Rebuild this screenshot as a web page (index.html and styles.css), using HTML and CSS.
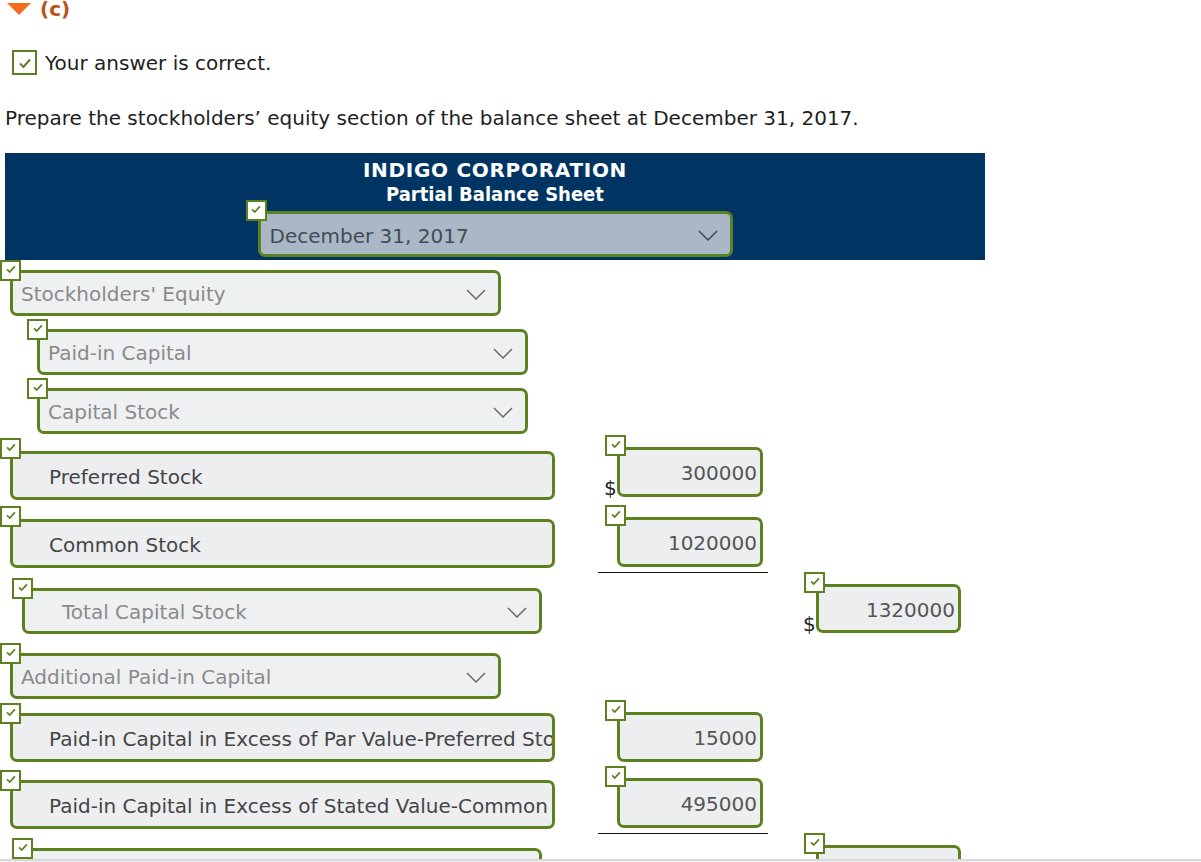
FILE: index.html
```html
<!DOCTYPE html>
<html>
<head>
<meta charset="utf-8">
<link rel="stylesheet" href="styles.css">
</head>
<body>
<div class="part-head"><span class="tri"></span><span class="part">(c)</span></div>

<div class="status">
  <span class="cb-big"><svg viewBox="0 0 16 16" width="16" height="16"><polyline points="3,8.5 6.5,12 13,4.5" /></svg></span>
  <span>Your answer is correct.</span>
</div>

<p class="prompt">Prepare the stockholders’ equity section of the balance sheet at December 31, 2017.</p>

<div class="sheet">
  <div class="sheet-head">
    <div class="t1">INDIGO CORPORATION</div>
    <div class="t2">Partial Balance Sheet</div>
    <div class="fw date-wrap">
      <span class="badge b-date"><svg viewBox="0 0 16 16"><polyline points="3.5,8.5 6.5,11.5 12.5,5" /></svg></span>
      <div class="sel date-sel"><span>December 31, 2017</span><svg class="chev" viewBox="0 0 20 11"><polyline points="1,1 10,10 19,1" /></svg></div>
    </div>
  </div>

  <div class="row r1">
    <div class="c1"><div class="fw l0">
      <span class="badge b-l"><svg viewBox="0 0 16 16"><polyline points="3.5,8.5 6.5,11.5 12.5,5" /></svg></span>
      <div class="sel w491"><span>Stockholders' Equity</span><svg class="chev" viewBox="0 0 20 11"><polyline points="1,1 10,10 19,1" /></svg></div>
    </div></div>
  </div>

  <div class="row r2">
    <div class="c1"><div class="fw l1">
      <span class="badge b-l"><svg viewBox="0 0 16 16"><polyline points="3.5,8.5 6.5,11.5 12.5,5" /></svg></span>
      <div class="sel w491"><span>Paid-in Capital</span><svg class="chev" viewBox="0 0 20 11"><polyline points="1,1 10,10 19,1" /></svg></div>
    </div></div>
  </div>

  <div class="row r3">
    <div class="c1"><div class="fw l1">
      <span class="badge b-l"><svg viewBox="0 0 16 16"><polyline points="3.5,8.5 6.5,11.5 12.5,5" /></svg></span>
      <div class="sel w491"><span>Capital Stock</span><svg class="chev" viewBox="0 0 20 11"><polyline points="1,1 10,10 19,1" /></svg></div>
    </div></div>
  </div>

  <div class="row r4">
    <div class="c1"><div class="fw l0">
      <span class="badge b-t"><svg viewBox="0 0 16 16"><polyline points="3.5,8.5 6.5,11.5 12.5,5" /></svg></span>
      <div class="txt">Preferred Stock</div>
    </div></div>
    <div class="c2 up4"><div class="fw num-wrap">
      <span class="badge b-n"><svg viewBox="0 0 16 16"><polyline points="3.5,8.5 6.5,11.5 12.5,5" /></svg></span>
      <span class="dollar">$</span>
      <div class="num">300000</div>
    </div></div>
  </div>

  <div class="row r5">
    <div class="c1"><div class="fw l0">
      <span class="badge b-t"><svg viewBox="0 0 16 16"><polyline points="3.5,8.5 6.5,11.5 12.5,5" /></svg></span>
      <div class="txt">Common Stock</div>
    </div></div>
    <div class="c2 up2"><div class="fw num-wrap">
      <span class="badge b-n"><svg viewBox="0 0 16 16"><polyline points="3.5,8.5 6.5,11.5 12.5,5" /></svg></span>
      <div class="num">1020000</div>
    </div>
    <div class="rule"></div></div>
  </div>

  <div class="row r6">
    <div class="c1"><div class="fw l2">
      <span class="badge b-l"><svg viewBox="0 0 16 16"><polyline points="3.5,8.5 6.5,11.5 12.5,5" /></svg></span>
      <div class="sel w520 indent"><span>Total Capital Stock</span><svg class="chev" viewBox="0 0 20 11"><polyline points="1,1 10,10 19,1" /></svg></div>
    </div></div>
    <div class="c2"></div>
    <div class="c3 up4"><div class="fw tot-wrap">
      <span class="badge b-n"><svg viewBox="0 0 16 16"><polyline points="3.5,8.5 6.5,11.5 12.5,5" /></svg></span>
      <span class="dollar">$</span>
      <div class="num">1320000</div>
    </div></div>
  </div>

  <div class="row r7">
    <div class="c1"><div class="fw l0">
      <span class="badge b-l"><svg viewBox="0 0 16 16"><polyline points="3.5,8.5 6.5,11.5 12.5,5" /></svg></span>
      <div class="sel w491"><span>Additional Paid-in Capital</span><svg class="chev" viewBox="0 0 20 11"><polyline points="1,1 10,10 19,1" /></svg></div>
    </div></div>
  </div>

  <div class="row r8">
    <div class="c1"><div class="fw l0">
      <span class="badge b-l"><svg viewBox="0 0 16 16"><polyline points="3.5,8.5 6.5,11.5 12.5,5" /></svg></span>
      <div class="txt"><span class="clip">Paid-in Capital in Excess of Par Value-Preferred Stock</span></div>
    </div></div>
    <div class="c2 up1"><div class="fw num-wrap">
      <span class="badge b-n"><svg viewBox="0 0 16 16"><polyline points="3.5,8.5 6.5,11.5 12.5,5" /></svg></span>
      <div class="num">15000</div>
    </div></div>
  </div>

  <div class="row r9">
    <div class="c1"><div class="fw l0">
      <span class="badge b-l"><svg viewBox="0 0 16 16"><polyline points="3.5,8.5 6.5,11.5 12.5,5" /></svg></span>
      <div class="txt"><span class="clip">Paid-in Capital in Excess of Stated Value-Common Stock</span></div>
    </div></div>
    <div class="c2 up2"><div class="fw num-wrap">
      <span class="badge b-n"><svg viewBox="0 0 16 16"><polyline points="3.5,8.5 6.5,11.5 12.5,5" /></svg></span>
      <div class="num">495000</div>
    </div>
    <div class="rule"></div></div>
  </div>

  <div class="row r10">
    <div class="c1"><div class="fw l2">
      <span class="badge b-l"><svg viewBox="0 0 16 16"><polyline points="3.5,8.5 6.5,11.5 12.5,5" /></svg></span>
      <div class="sel w520 indent"></div>
    </div></div>
    <div class="c2"></div>
    <div class="c3 up3"><div class="fw tot-wrap">
      <span class="badge b-n"><svg viewBox="0 0 16 16"><polyline points="3.5,8.5 6.5,11.5 12.5,5" /></svg></span>
      <div class="num"></div>
    </div></div>
  </div>
</div>

<div class="bottom-edge"></div>
</body>
</html>
```

FILE: styles.css
```css
html, body {
  margin: 0;
  padding: 0;
  background: #ffffff;
}
body {
  font-family: "DejaVu Sans", Verdana, sans-serif;
  font-size: 20px;
  color: #1e1e1e;
  overflow: hidden;
  height: 862px;
}

.part-head {
  display: flex;
  align-items: center;
  height: 22px;
  margin-top: -2px;
  padding-left: 7px;
  gap: 9px;
}
.tri {
  width: 0;
  height: 0;
  border-left: 12px solid transparent;
  border-right: 12px solid transparent;
  border-top: 12px solid #f36d1f;
  margin-top: 0;
}
.part {
  color: #b8521b;
  font-weight: bold;
  font-size: 20px;
  line-height: 22px;
}

.status {
  display: flex;
  align-items: center;
  gap: 8px;
  margin: 30px 0 0 12px;
  height: 25px;
  line-height: 25px;
}
.status span:last-child {
  padding-top: 2px;
}
.cb-big {
  box-sizing: border-box;
  width: 25px;
  height: 25px;
  border: 2px solid #5c8220;
  background: #fff;
  display: flex;
  align-items: center;
  justify-content: center;
}
.cb-big svg polyline {
  fill: none;
  stroke: #5c8220;
  stroke-width: 2;
}

.prompt {
  margin: 31px 0 0 5px;
  line-height: 24px;
  height: 24px;
}

.sheet {
  margin-top: 23px;
}
.sheet-head {
  box-sizing: border-box;
  margin-left: 5px;
  width: 980px;
  height: 107px;
  background: #003462;
  color: #ffffff;
  font-weight: bold;
  text-align: center;
  padding-top: 5px;
}
.t1, .t2 {
  line-height: 24px;
  height: 24px;
  font-size: 20px;
}
.t1 {
  letter-spacing: 0.7px;
}
.t2 {
  font-family: "DejaVu Sans Condensed", "DejaVu Sans", sans-serif;
}
.date-wrap {
  width: 475px;
  margin: 5px auto 0;
  text-align: left;
  font-weight: normal;
}

.fw {
  position: relative;
}
.badge {
  position: absolute;
  box-sizing: border-box;
  width: 21px;
  height: 21px;
  border: 2px solid #5c8220;
  background: #ffffff;
  z-index: 2;
  display: flex;
  align-items: flex-start;
  justify-content: center;
}
.badge svg {
  width: 14px;
  height: 14px;
}
.badge svg polyline {
  fill: none;
  stroke: #5c8220;
  stroke-width: 2;
}
.b-date { left: -12px; top: -11px; }
.b-l { left: -10px; top: -10px; }
.b-t { left: -10px; top: -13px; }
.b-n { left: -12px; top: -12px; }

.sel {
  box-sizing: border-box;
  height: 46px;
  border: 3px solid #5c8220;
  border-radius: 7px;
  background: #eff0f2;
  color: #8a8a8a;
  display: flex;
  align-items: center;
  justify-content: space-between;
  padding: 2px 12px 0 8px;
  white-space: nowrap;
}
.date-sel {
  background: #a9b7c7;
  color: #434b55;
  padding-left: 9px;
  padding-top: 3px;
}
.chev {
  width: 20px;
  height: 11px;
  flex: none;
  margin-left: auto;
}
.chev polyline {
  fill: none;
  stroke: #6b6b6b;
  stroke-width: 1.5;
}
.date-sel .chev polyline { stroke: #434b55; }

.w491 { width: 491px; }
.w520 { width: 520px; }
.indent { padding-left: 37px; }

.txt {
  box-sizing: border-box;
  width: 545px;
  height: 49px;
  border: 3px solid #5c8220;
  border-radius: 7px;
  background: #eceef0;
  color: #454545;
  display: flex;
  align-items: center;
  padding: 2px 0 0 36px;
  white-space: nowrap;
  overflow: hidden;
}

.row {
  display: flex;
  align-items: flex-start;
}
.c1 { width: 590px; flex: none; }
.c2 { width: 200px; flex: none; }
.c3 { width: 200px; flex: none; }

.l0 { margin-left: 10px; }
.l1 { margin-left: 37px; }
.l2 { margin-left: 22px; }

.up1 { margin-top: -1px; }
.up2 { margin-top: -2px; }
.up3 { margin-top: -3px; }
.up4 { margin-top: -4px; }

.r1 { margin-top: 10px; }
.r2 { margin-top: 13px; }
.r3 { margin-top: 13px; }
.r4 { margin-top: 17px; }
.r5 { margin-top: 19px; }
.r6 { margin-top: 15px; }
.r7 { margin-top: 19px; }
.r8 { margin-top: 14px; }
.r9 { margin-top: 18px; }
.r10 { margin-top: 14px; }

.num-wrap { margin-left: 27px; width: 146px; }
.tot-wrap { margin-left: 26px; width: 145px; }
.num {
  box-sizing: border-box;
  height: 50px;
  border: 3px solid #5c8220;
  border-radius: 7px;
  background: #eceef0;
  color: #555555;
  display: flex;
  align-items: center;
  justify-content: flex-end;
  padding: 2px 3px 0 0;
}
.tot-wrap .num { height: 49px; }
.dollar {
  position: absolute;
  left: -13px;
  bottom: -1px;
  line-height: 20px;
  color: #1e1e1e;
  z-index: 1;
}
.rule {
  margin: 5px 0 0 8px;
  width: 170px;
  height: 1px;
  background: #111111;
}

.bottom-edge {
  position: fixed;
  left: 0;
  right: 0;
  bottom: 0;
  height: 2px;
  background: #d9d9d9;
  border-bottom: 1px solid #eef0f4;
  z-index: 5;
}
```
